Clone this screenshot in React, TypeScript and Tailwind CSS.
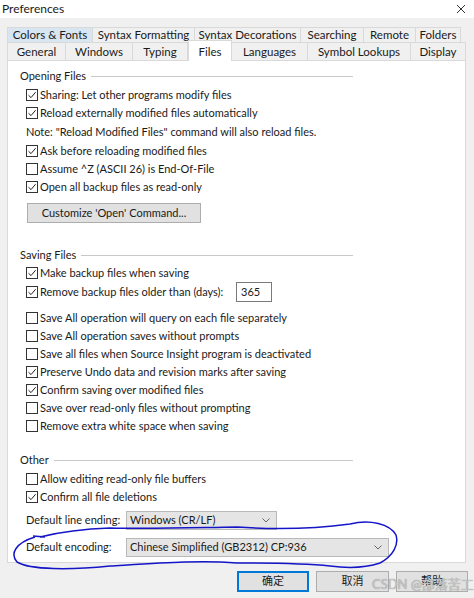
import React from "react";

const row1 = [
  { t: "Colors & Fonts", w: 86, hot: true },
  { t: "Syntax Formatting", w: 102 },
  { t: "Syntax Decorations", w: 106 },
  { t: "Searching", w: 63 },
  { t: "Remote", w: 52 },
  { t: "Folders", w: 45 },
];

const row2 = [
  { t: "General", w: 59 },
  { t: "Windows", w: 67 },
  { t: "Typing", w: 55 },
  { t: "Files", w: 44, sel: true },
  { t: "Languages", w: 76 },
  { t: "Symbol Lookups", w: 103 },
  { t: "Display", w: 55 },
];

function Box({ checked }: { checked?: boolean }) {
  return (
    <span className="w-[12px] h-[12px] border border-[#333] bg-white flex items-center justify-center shrink-0 mr-[2px]">
      {checked && (
        <svg width="10" height="10" viewBox="0 0 10 10">
          <path d="M1.5 5.2 L4 7.6 L8.6 2.2" fill="none" stroke="#222" strokeWidth="1" />
        </svg>
      )}
    </span>
  );
}

function Check({ label, checked, className = "" }: { label: string; checked?: boolean; className?: string }) {
  return (
    <div className={`h-[18px] flex items-center ml-[6px] ${className}`}>
      <Box checked={checked} />
      <span>{label}</span>
    </div>
  );
}

function Group({ title, className = "" }: { title: string; className?: string }) {
  return (
    <div className={`h-[18px] flex items-center w-[333px] ${className}`}>
      <span className="pr-[5px]">{title}</span>
      <div className="flex-1 h-px bg-[#c8c8c8]" />
    </div>
  );
}

function Select({ value, w }: { value: string; w: string }) {
  return (
    <div className={`${w} h-[19px] bg-[#e5e5e5] border border-[#b9b9b9] flex items-center justify-between pl-[3px] pr-[6px]`}>
      <span>{value}</span>
      <svg width="8" height="5" viewBox="0 0 8 5">
        <path d="M0.5 0.5 L4 4 L7.5 0.5" fill="none" stroke="#666" strokeWidth="1" />
      </svg>
    </div>
  );
}

export default function App() {
  return (
    <div
      className="w-[474px] h-[598px] bg-[#f0f0f0] relative overflow-hidden text-[11px] text-[#1a1a1a] whitespace-nowrap"
      style={{ fontFamily: 'Lato, "Noto Sans CJK SC", sans-serif' }}
    >
      <div className="h-[18px] bg-white flex items-center justify-between pl-[2px] pr-[8px]">
        <span className="text-[12px]">Preferences</span>
        <svg width="10" height="10" viewBox="0 0 10 10">
          <path d="M1 1 L9 9 M9 1 L1 9" stroke="#333" strokeWidth="1" />
        </svg>
      </div>

      <div className="mt-[9px] ml-[7px]">
        <div className="flex h-[15px] text-[11.5px]">
          {row1.map((t) => (
            <div
              key={t.t}
              style={{ width: t.w }}
              className={`border-t border-r border-[#d9d9d9] first:border-l flex items-center justify-center ${
                t.hot ? "bg-[#d8e6f2]" : "bg-[#f0f0f0]"
              }`}
            >
              {t.t}
            </div>
          ))}
        </div>
        <div className="flex h-[18px] items-end text-[11.5px]">
          {row2.map((t) =>
            t.sel ? (
              <div
                key={t.t}
                style={{ width: t.w }}
                className="h-[21px] -mb-px bg-white border border-b-0 border-[#d9d9d9] flex items-start justify-center pt-[2px] relative z-10"
              >
                {t.t}
              </div>
            ) : (
              <div
                key={t.t}
                style={{ width: t.w }}
                className="h-[18px] border-t border-r border-[#d9d9d9] first:border-l flex items-center justify-center bg-[#f0f0f0]"
              >
                {t.t}
              </div>
            )
          )}
        </div>

        <div className="w-[459px] h-[503px] bg-white border border-[#d9d9d9] pl-[12px] pt-[6px]">
          <Group title="Opening Files" />
          <Check className="mt-[1px]" checked label="Sharing: Let other programs modify files" />
          <Check checked label="Reload externally modified files automatically" />
          <div className="h-[18px] flex items-center ml-[6px] mt-[1px]">
            Note: "Reload Modified Files" command will also reload files.
          </div>
          <Check className="mt-[1px]" checked label="Ask before reloading modified files" />
          <Check label="Assume ^Z (ASCII 26) is End-Of-File" />
          <Check checked label="Open all backup files as read-only" />
          <button className="mt-[7px] ml-[7px] w-[174px] h-[20px] bg-[#e1e1e1] border border-[#adadad] flex items-center justify-center">
            Customize 'Open' Command...
          </button>

          <Group className="mt-[23px]" title="Saving Files" />
          <Check checked label="Make backup files when saving" />
          <div className="h-[22px] flex items-center ml-[6px] mt-[-1px]">
            <Box checked />
            <span className="w-[196px]">Remove backup files older than (days):</span>
            <div className="w-[36px] h-[20px] border border-[#7a7a7a] bg-white flex items-center pl-[4px]">365</div>
          </div>
          <Check className="mt-[6px]" label="Save All operation will query on each file separately" />
          <Check label="Save All operation saves without prompts" />
          <Check label="Save all files when Source Insight program is deactivated" />
          <Check checked label="Preserve Undo data and revision marks after saving" />
          <Check checked label="Confirm saving over modified files" />
          <Check label="Save over read-only files without prompting" />
          <Check label="Remove extra white space when saving" />

          <Group className="mt-[16px]" title="Other" />
          <Check className="mt-[1px]" label="Allow editing read-only file buffers" />
          <Check checked label="Confirm all file deletions" />
          <div className="h-[19px] flex items-center ml-[6px] mt-[5px]">
            <span className="w-[100px]">Default line ending:</span>
            <Select w="w-[151px]" value="Windows (CR/LF)" />
          </div>
          <div className="h-[19px] flex items-center ml-[6px] mt-[8px]">
            <span className="w-[100px]">Default encoding:</span>
            <Select w="w-[263px]" value="Chinese Simplified (GB2312)  CP:936" />
          </div>
        </div>
      </div>

      <div className="flex gap-[7px] ml-[237px] mt-[8px]">
        <button className="w-[72px] h-[21px] bg-[#e1e1e1] border-2 border-[#0078d7] flex items-center justify-center">确定</button>
        <button className="w-[73px] h-[21px] bg-[#e1e1e1] border border-[#adadad] flex items-center justify-center">取消</button>
        <button className="w-[72px] h-[21px] bg-[#e1e1e1] border border-[#adadad] flex items-center justify-center">帮助</button>
      </div>

      <div className="absolute left-[372px] top-[575px] text-[13px] text-[#c8c8c8]/90 [text-shadow:0_0_1px_#888]">CSDN @部落苦工</div>

      <svg className="absolute inset-0 pointer-events-none" width="474" height="598">
        <path d="M33 536 L45 537" stroke="#1515c8" strokeWidth="1.5" fill="none" />
        <path
          d="M40 537 C60 532 80 529 110 528 C150 529 180 528 237 527 C280 530 320 528 350 524 C370 519 390 524 396 535 C399 545 393 556 380 563 C365 568 345 568 330 566 C300 563 270 563 237 563 C200 560 160 563 110 566 C70 570 30 570 17 562 C10 554 15 543 35 537"
          stroke="#1515c8"
          strokeWidth="1.5"
          fill="none"
        />
      </svg>
    </div>
  );
}
